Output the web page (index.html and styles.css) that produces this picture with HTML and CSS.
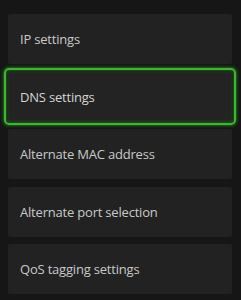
FILE: index.html
```html
<!DOCTYPE html>
<html>
<head>
<meta charset="utf-8" />
<title>Advanced settings</title>
<link rel="stylesheet" href="styles.css">
</head>
<body>
<ul class="menu">
	<li class="item">IP settings</li>
	<li class="item focus">DNS settings</li>
	<li class="item">Alternate MAC address</li>
	<li class="item">Alternate port selection</li>
	<li class="item">QoS tagging settings</li>
</ul>
</body>
</html>
```

FILE: styles.css
```css
body,ul{margin:0;padding:0;}
body{background:#161616;font-family:"Open Sans","Noto Sans",sans-serif;height:300px;overflow:hidden;}
.menu{list-style:none;display:flex;flex-direction:column;gap:7.5px;padding:14px 9px 0 8px;}
.item{position:relative;height:50px;background:#222;border-radius:2px;display:flex;align-items:center;padding-left:12px;font-size:13px;letter-spacing:-0.2px;color:#c9c9c9;}
.focus{background:#232323;color:#d4d4d4;}
.focus:after{content:"";position:absolute;left:-4px;right:-4px;top:-4px;bottom:-3px;border:2px solid #3fb531;border-radius:5px;box-shadow:0 0 3px 1px rgba(40,170,30,.6),inset 0 0 3px 1px rgba(40,170,30,.5);}
```
